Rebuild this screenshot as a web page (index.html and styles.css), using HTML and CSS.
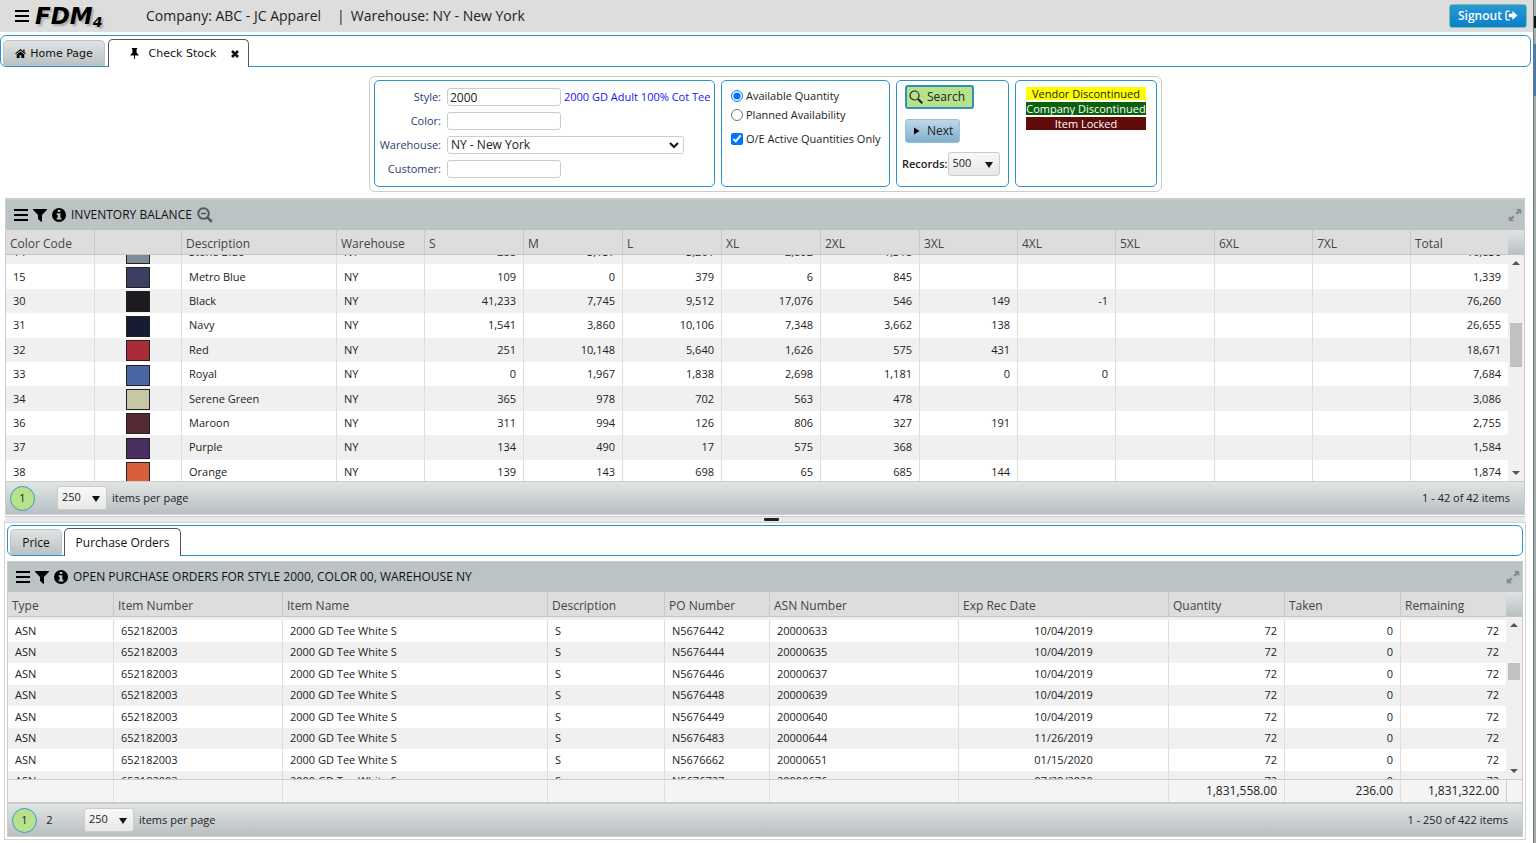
FILE: index.html
```html
<!DOCTYPE html>
<html lang="en">
<head>
<meta charset="utf-8">
<title>Check Stock</title>
<link rel="stylesheet" href="styles.css">
</head>
<body>
<svg class="defs" width="0" height="0" aria-hidden="true">
  <symbol id="i-menu" viewBox="0 0 14 12"><path d="M0 0h14v2H0zM0 5h14v2H0zM0 10h14v2H0z"/></symbol>
  <symbol id="i-filter" viewBox="0 0 14 14"><path d="M.6 1h12.8c.6 0 .8.7.4 1.100L9 7v6.300c0 .5-.5.7-.9.4L5.400 11.200A1 1 0 0 1 5 10.500V7L.2 2.100C-.2 1.700 0 1 .6 1z"/></symbol>
  <symbol id="i-info" viewBox="0 0 14 14"><circle cx="7" cy="7" r="7"/><path fill="#bcc3c4" d="M5.800 2h2.500v2H5.800zM4.800 5.200h3.600v4.600h1v1.700H4.700V9.800h1V6.900h-.9z"/></symbol>
  <symbol id="i-expand" viewBox="0 0 14 14"><path d="M8 1h5.200v5.200L11.400 4.400 9 6.800 7.400 5.200 9.800 2.800zM6 13.200H.8V8l1.800 1.800L5 7.400 6.600 9 4.200 11.400z"/></symbol>
</svg>
<div class="shell">
<div class="app">
  <header class="topbar">
    <button class="icon-btn menu" aria-label="Menu"><svg><use href="#i-menu"/></svg></button>
    <span class="logo">FDM<sub>4</sub></span>
    <span class="context">Company: ABC - JC Apparel</span>
    <span class="context-sep">|</span>
    <span class="context">Warehouse: NY - New York</span>
    <button class="signout">Signout <svg viewBox="0 0 14 12"><path fill="none" stroke="#fff" stroke-width="1.500" d="M5 1.200H2.500Q1 1.200 1 2.700v6.600q0 1.500 1.500 1.500H5"/><path fill="#fff" d="M4 4h4V1.200L13.500 6 8 10.800V8H4z"/></svg></button>
  </header>

  <nav class="tabs main-tabs">
    <button class="tab"><svg class="home" viewBox="0 0 12 10"><path d="M6 0l6 5-.8.900L6 1.700.8 5.900 0 5zM9 .500h1.500v3L9 2.300zM6 2.700l4.200 3.400V10H7V7H5v3H1.800V6.100z"/></svg> Home Page</button>
    <button class="tab active"><svg class="pin" viewBox="0 0 10 12"><path d="M2 0h6v1.200H7.300v4L9.500 7.500v.8H5.500V12h-1V8.300H.5v-.8L2.700 5.200v-4H2z"/></svg> Check Stock <svg class="close" viewBox="0 0 8 8"><path stroke="#111" stroke-width="2.600" d="M1 1l6 6M7 1L1 7"/></svg></button>
  </nav>

  <form class="filters">
    <section class="box lookup">
      <label for="style">Style:</label>
      <div class="with-note"><input class="field" id="style" value="2000"><span class="note">2000 GD Adult 100% Cot Tee</span></div>
      <label for="color">Color:</label>
      <div><input class="field" id="color"></div>
      <label for="wh">Warehouse:</label>
      <div class="select-wrap"><select class="field wide" id="wh"><option>NY - New York</option></select><svg viewBox="0 0 10 7"><path fill="none" stroke="#111" stroke-width="2" d="M1 1l4 4 4-4"/></svg></div>
      <label for="cust">Customer:</label>
      <div><input class="field" id="cust"></div>
    </section>
    <section class="box choices">
      <label><input type="radio" name="qty" checked>Available Quantity</label>
      <label><input type="radio" name="qty">Planned Availability</label>
      <label class="check"><input type="checkbox" checked>O/E Active Quantities Only</label>
    </section>
    <section class="box actions">
      <button type="button" class="btn search"><svg viewBox="0 0 14 14"><circle cx="5.500" cy="5.500" r="4.500" fill="none" stroke="#222" stroke-width="1.200"/><path stroke="#222" stroke-width="2" d="M9 9l4.300 4.300"/></svg>Search</button>
      <button type="button" class="btn next"><svg viewBox="0 0 14 14"><path d="M5 3.500L10.500 7 5 10.500z"/></svg>Next</button>
      <div class="records"><label for="rec">Records:</label><span class="drop"><select id="rec"><option>500</option></select></span></div>
    </section>
    <section class="box legend">
      <span class="tag vendor">Vendor Discontinued</span>
      <span class="tag company">Company Discontinued</span>
      <span class="tag locked">Item Locked</span>
    </section>
  </form>

  <section class="grid stock">
    <div class="toolbar">
      <button class="icon-btn" aria-label="Menu"><svg><use href="#i-menu"/></svg></button>
      <button class="icon-btn" aria-label="Filter"><svg><use href="#i-filter"/></svg></button>
      <button class="icon-btn" aria-label="Info"><svg><use href="#i-info"/></svg></button>
      <h2>INVENTORY BALANCE</h2>
      <button class="icon-btn zoom" aria-label="Zoom out"><svg viewBox="0 0 16 16"><g fill="none" stroke="#555b5c" stroke-width="2"><circle cx="6.500" cy="6.500" r="5.300"/><path stroke-width="2.600" d="M10.500 10.500l4.300 4.300"/><path stroke-width="1.600" d="M4 6.500h5"/></g></svg></button>
      <button class="icon-btn expand" aria-label="Expand"><svg><use href="#i-expand"/></svg></button>
    </div>
    <div class="head">
      <table><colgroup><col class="w88"><col class="w87"><col class="w155"><col class="w88"><col class="w99"><col class="w99"><col class="w99"><col class="w99"><col class="w99"><col class="w98"><col class="w98"><col class="w99"><col class="w98"><col class="w98"><col class="w98"></colgroup>
      <thead><tr><th>Color Code</th><th></th><th>Description</th><th>Warehouse</th><th>S</th><th>M</th><th>L</th><th>XL</th><th>2XL</th><th>3XL</th><th>4XL</th><th>5XL</th><th>6XL</th><th>7XL</th><th>Total</th></tr></thead></table>
      <i class="corner"></i>
    </div>
    <div class="body">
      <div class="view"><table><colgroup><col class="w88"><col class="w87"><col class="w155"><col class="w88"><col class="w99"><col class="w99"><col class="w99"><col class="w99"><col class="w99"><col class="w98"><col class="w98"><col class="w99"><col class="w98"><col class="w98"><col class="w98"></colgroup>
      <tbody>
      <tr><td>14</td><td><i class="swatch" style="background:#7b8c98"></i></td><td>Stone Blue</td><td>NY</td><td>288</td><td>3,137</td><td>3,201</td><td>2,892</td><td>1,318</td><td></td><td></td><td></td><td></td><td></td><td>10,836</td></tr>
      <tr><td>15</td><td><i class="swatch" style="background:#3c3f60"></i></td><td>Metro Blue</td><td>NY</td><td>109</td><td>0</td><td>379</td><td>6</td><td>845</td><td></td><td></td><td></td><td></td><td></td><td>1,339</td></tr>
      <tr><td>30</td><td><i class="swatch" style="background:#1c1b20"></i></td><td>Black</td><td>NY</td><td>41,233</td><td>7,745</td><td>9,512</td><td>17,076</td><td>546</td><td>149</td><td>-1</td><td></td><td></td><td></td><td>76,260</td></tr>
      <tr><td>31</td><td><i class="swatch" style="background:#161c32"></i></td><td>Navy</td><td>NY</td><td>1,541</td><td>3,860</td><td>10,106</td><td>7,348</td><td>3,662</td><td>138</td><td></td><td></td><td></td><td></td><td>26,655</td></tr>
      <tr><td>32</td><td><i class="swatch" style="background:#ab2b38"></i></td><td>Red</td><td>NY</td><td>251</td><td>10,148</td><td>5,640</td><td>1,626</td><td>575</td><td>431</td><td></td><td></td><td></td><td></td><td>18,671</td></tr>
      <tr><td>33</td><td><i class="swatch" style="background:#4766a3"></i></td><td>Royal</td><td>NY</td><td>0</td><td>1,967</td><td>1,838</td><td>2,698</td><td>1,181</td><td>0</td><td>0</td><td></td><td></td><td></td><td>7,684</td></tr>
      <tr><td>34</td><td><i class="swatch" style="background:#c5c7a5"></i></td><td>Serene Green</td><td>NY</td><td>365</td><td>978</td><td>702</td><td>563</td><td>478</td><td></td><td></td><td></td><td></td><td></td><td>3,086</td></tr>
      <tr><td>36</td><td><i class="swatch" style="background:#552a32"></i></td><td>Maroon</td><td>NY</td><td>311</td><td>994</td><td>126</td><td>806</td><td>327</td><td>191</td><td></td><td></td><td></td><td></td><td>2,755</td></tr>
      <tr><td>37</td><td><i class="swatch" style="background:#482e61"></i></td><td>Purple</td><td>NY</td><td>134</td><td>490</td><td>17</td><td>575</td><td>368</td><td></td><td></td><td></td><td></td><td></td><td>1,584</td></tr>
      <tr><td>38</td><td><i class="swatch" style="background:#d75f3a"></i></td><td>Orange</td><td>NY</td><td>139</td><td>143</td><td>698</td><td>65</td><td>685</td><td>144</td><td></td><td></td><td></td><td></td><td>1,874</td></tr>
      </tbody></table></div>
      <div class="scroll"><i class="up"></i><i class="thumb"></i><i class="down"></i></div>
    </div>
    <footer class="pager">
      <button class="page current">1</button>
      <span class="drop"><select id="size1"><option>250</option></select></span>
      <label for="size1">items per page</label>
      <span class="range">1 - 42 of 42 items</span>
    </footer>
  </section>

  <div class="splitter"><i></i></div>

  <section class="lower">
    <nav class="tabs sub-tabs">
      <button class="tab">Price</button>
      <button class="tab active">Purchase Orders</button>
    </nav>
    <section class="grid orders">
      <div class="toolbar">
        <button class="icon-btn" aria-label="Menu"><svg><use href="#i-menu"/></svg></button>
        <button class="icon-btn" aria-label="Filter"><svg><use href="#i-filter"/></svg></button>
        <button class="icon-btn" aria-label="Info"><svg><use href="#i-info"/></svg></button>
        <h2>OPEN PURCHASE ORDERS FOR STYLE 2000, COLOR 00, WAREHOUSE NY</h2>
        <button class="icon-btn expand" aria-label="Expand"><svg><use href="#i-expand"/></svg></button>
      </div>
      <div class="head">
        <table><colgroup><col class="w105"><col class="w169"><col class="w265"><col class="w117"><col class="w105"><col class="w189"><col class="w210"><col class="w116"><col class="w116"><col class="w106"></colgroup>
        <thead><tr><th>Type</th><th>Item Number</th><th>Item Name</th><th>Description</th><th>PO Number</th><th>ASN Number</th><th>Exp Rec Date</th><th>Quantity</th><th>Taken</th><th>Remaining</th></tr></thead></table>
        <i class="corner"></i>
      </div>
      <div class="body">
        <div class="view"><table><colgroup><col class="w105"><col class="w169"><col class="w265"><col class="w117"><col class="w105"><col class="w189"><col class="w210"><col class="w116"><col class="w116"><col class="w106"></colgroup>
        <tbody>
        <tr><td>ASN</td><td>652182003</td><td>2000 GD Tee White S</td><td>S</td><td>N5676442</td><td>20000633</td><td>10/04/2019</td><td>72</td><td>0</td><td>72</td></tr>
        <tr><td>ASN</td><td>652182003</td><td>2000 GD Tee White S</td><td>S</td><td>N5676444</td><td>20000635</td><td>10/04/2019</td><td>72</td><td>0</td><td>72</td></tr>
        <tr><td>ASN</td><td>652182003</td><td>2000 GD Tee White S</td><td>S</td><td>N5676446</td><td>20000637</td><td>10/04/2019</td><td>72</td><td>0</td><td>72</td></tr>
        <tr><td>ASN</td><td>652182003</td><td>2000 GD Tee White S</td><td>S</td><td>N5676448</td><td>20000639</td><td>10/04/2019</td><td>72</td><td>0</td><td>72</td></tr>
        <tr><td>ASN</td><td>652182003</td><td>2000 GD Tee White S</td><td>S</td><td>N5676449</td><td>20000640</td><td>10/04/2019</td><td>72</td><td>0</td><td>72</td></tr>
        <tr><td>ASN</td><td>652182003</td><td>2000 GD Tee White S</td><td>S</td><td>N5676483</td><td>20000644</td><td>11/26/2019</td><td>72</td><td>0</td><td>72</td></tr>
        <tr><td>ASN</td><td>652182003</td><td>2000 GD Tee White S</td><td>S</td><td>N5676662</td><td>20000651</td><td>01/15/2020</td><td>72</td><td>0</td><td>72</td></tr>
        <tr><td>ASN</td><td>652182003</td><td>2000 GD Tee White S</td><td>S</td><td>N5676727</td><td>20000676</td><td>07/29/2020</td><td>72</td><td>0</td><td>72</td></tr>
        </tbody></table></div>
        <div class="scroll"><i class="up"></i><i class="thumb"></i><i class="down"></i></div>
      </div>
      <div class="totals">
        <table><colgroup><col class="w105"><col class="w169"><col class="w265"><col class="w117"><col class="w105"><col class="w189"><col class="w210"><col class="w116"><col class="w116"><col class="w106"></colgroup>
        <tfoot><tr><td></td><td></td><td></td><td></td><td></td><td></td><td></td><td>1,831,558.00</td><td>236.00</td><td>1,831,322.00</td></tr></tfoot></table>
        <i class="totals-end"></i>
      </div>
      <footer class="pager">
        <button class="page current">1</button>
        <button class="page">2</button>
        <span class="drop"><select id="size2"><option>250</option></select></span>
        <label for="size2">items per page</label>
        <span class="range">1 - 250 of 422 items</span>
      </footer>
    </section>
  </section>
</div>
<aside class="edge"><i class="mark"></i><i class="blue"></i></aside>
</div>
</body>
</html>
```

FILE: styles.css
```css
* { box-sizing: border-box; }
body { margin: 0; background: #fff; color: #222; font: 11px/16px "Open Sans", "Noto Sans", sans-serif; }
button, input, select { font: inherit; color: inherit; margin: 0; }
button { border: 0; background: none; padding: 0; cursor: pointer; }
.defs { position: absolute; }
.shell { display: flex; min-height: 100vh; overflow: hidden; }
.app { flex: 1; min-width: 0; }

.edge { width: 3px; background: #a4adb2; border-left: 1px solid #6e7478; display: flex; flex-direction: column; }
.edge .mark { height: 12px; margin-top: 16px; background: #111; }
.edge .blue { height: 52px; margin-top: 16px; background: #4a7bb0; }

.topbar { display: flex; align-items: center; height: 32px; padding: 0 6px 0 15px; background: #ddd; font-size: 14px; }
.menu svg { width: 14px; height: 12px; }
.icon-btn { display: flex; }
.logo { width: 111px; margin-left: 6px; color: #000; font: italic bold 23px/26px "DejaVu Sans", sans-serif; text-shadow: 2px 2px 2px #aaa; }
.logo sub { font-size: 14px; line-height: 8px; vertical-align: -3px; }
.context-sep { margin: 0 6px 0 16px; }
.signout { margin-left: auto; height: 24px; width: 78px; border: 1px solid #7cc49a; border-radius: 3px; background: linear-gradient(#2b98d6, #0a80cc); color: #fff; font-size: 12px; font-weight: 600; }
.signout svg { width: 13px; height: 11px; vertical-align: -1px; }

.tabs { display: flex; align-items: flex-end; gap: 3px; border: 1px solid #2a93cf; border-radius: 6px; background: #fff; }
.main-tabs { height: 32px; margin: 3px 2px 0 0; padding-left: 2px; }
.tab { display: flex; align-items: center; justify-content: center; height: 26px; border: 1px solid #c0c4c6; border-bottom: 0; border-radius: 5px 5px 0 0; background: linear-gradient(#dfe3e4, #bac1c3); font-size: 12px; color: #111; }
.tab.active { height: 28px; margin-bottom: -1px; background: #fff; border-color: #555; }
.main-tabs .tab { width: 102px; gap: 4px; font-family: "DejaVu Sans", sans-serif; font-size: 11px; }
.main-tabs .tab.active { width: 141px; gap: 10px; padding-left: 12px; }
.home { width: 11px; height: 9px; }
.pin { width: 9px; height: 11px; }
.close { width: 8px; height: 8px; margin-left: 5px; }

.filters { display: flex; gap: 6px; width: 793px; margin: 9px 0 6px 369px; padding: 3px 4px 4px; border: 1px solid #ccc; border-radius: 6px; }
.box { height: 107px; border: 1px solid #2a93cf; border-radius: 5px; }
.lookup { width: 341px; display: grid; grid-template-columns: 66px 1fr; column-gap: 6px; grid-auto-rows: 24px; align-items: center; padding-top: 4px; }
.lookup > label { text-align: right; color: #2b3c6e; }
.lookup > div { display: flex; align-items: center; }
.field { width: 114px; height: 18px; padding: 0 2px; border: 1px solid #ccc; border-radius: 3px; background: #fff; font-size: 12px; line-height: 16px; }
.field.wide { width: 237px; padding: 0 3px; appearance: none; }
.select-wrap { position: relative; }
.select-wrap svg { position: absolute; left: 222px; width: 10px; height: 7px; }
.note { margin-left: 3px; color: #1414f0; white-space: nowrap; }
.choices { width: 169px; padding: 5px 9px; white-space: nowrap; }
.choices label { display: flex; align-items: center; gap: 3px; height: 19px; }
.choices label.check { margin-top: 5px; }
.choices input { width: 12px; height: 12px; }
.actions { width: 113px; padding: 4px 0 0 8px; }
.btn { display: flex; align-items: center; height: 24px; border-radius: 3px; border: 1px solid #9dbdd0; padding-left: 3px; font-size: 12px; }
.btn svg { width: 14px; height: 14px; margin-right: 4px; }
.search { width: 69px; padding-left: 2px; background: #b5e28b; border: 2px solid #2d91bd; }
.next { width: 55px; margin-top: 10px; background: linear-gradient(#bdd8e8, #7fb0cf); }
.records { display: flex; align-items: center; margin: 9px 0 0 -3px; font-weight: 600; }
.drop { position: relative; display: inline-flex; }
.drop select { appearance: none; width: 50px; height: 24px; padding: 0 0 2px 4px; border: 1px solid #ccc; border-radius: 3px; background: linear-gradient(#f8f8f8, #e8e8e8); font-weight: 400; }
.drop::after { content: ""; position: absolute; right: 7px; top: 10px; border: 4px solid transparent; border-top: 6px solid #111; border-bottom: 0; pointer-events: none; }
.records .drop select { width: 52px; }
.legend { width: 142px; padding: 6px 10px; display: flex; flex-direction: column; gap: 2px; }
.tag { height: 13px; line-height: 13px; text-align: center; white-space: nowrap; }
.vendor { background: #ff0; }
.company { background: #0b610b; color: #fff; }
.locked { background: #610b0b; color: #fff; }

.grid { border: 1px solid #ccc; }
.stock { margin: 0 8px 0 5px; border-top-width: 2px; }
.toolbar { display: flex; align-items: center; gap: 5px; height: 30px; padding: 0 2px 0 8px; background: #bcc3c4; }
.toolbar svg { width: 14px; height: 14px; }
.toolbar h2 { margin: 0; font-size: 12px; font-weight: 400; color: #111; }
.toolbar .zoom svg { width: 16px; height: 16px; }
.toolbar .expand { margin-left: auto; fill: #85898a; }
table { flex: 1; width: 100%; table-layout: fixed; border-collapse: separate; border-spacing: 0; }
th, td { border-left: 1px solid #ddd; padding: 0 7px; white-space: nowrap; overflow: hidden; text-align: left; }
th:first-child, td:first-child { border-left: 0; }
.head { display: flex; height: 25px; background: #ddd; border-bottom: 1px solid #c4c4c4; }
.head table { height: 24px; }
th { padding: 3px 4px 0; font-size: 12px; font-weight: 400; color: #444; border-left-color: #c8c8c8; }
.corner { width: 16px; background: linear-gradient(#dfe3e4, #bac1c3); }
.body { display: flex; overflow: hidden; }
.view { flex: 1; min-width: 0; }
.stock .body { height: 226px; }
.stock .view table { height: 244px; margin-top: -15px; }
.stock tbody tr:nth-child(odd), .orders tbody tr:nth-child(even) { background: #f0f0f0; }
td:nth-child(2) .swatch { display: block; width: 24px; height: 21px; margin: 2px auto 0; border: 1px solid #222; }
.stock td:nth-child(n+5) { text-align: right; }
.orders td:nth-child(7) { text-align: center; }
.orders td:nth-child(n+8) { text-align: right; }
.scroll { width: 16px; background: #f0f0f0; display: flex; flex-direction: column; align-items: center; padding: 6px 0; }
.scroll .up, .scroll .down { border: 4px solid transparent; border-top: 0; border-bottom: 4px solid #555; }
.scroll .down { border-top: 4px solid #555; border-bottom: 0; margin-top: auto; }
.scroll .thumb { width: 12px; height: 44px; margin-top: 58px; background: #c1c1c1; }
.pager { display: flex; align-items: center; height: 33px; padding: 0 14px 0 4px; border-top: 1px solid #ccc; background: linear-gradient(#e0e4e4, #b9c0c2); }
.page { width: 25px; height: 25px; border-radius: 50%; }
.page.current { background: #b5e28b; border: 1px solid #3d9cc0; }
.pager .drop { margin: 0 5px 0 22px; }
.range { margin-left: auto; }

.splitter { display: flex; justify-content: center; align-items: center; height: 6px; margin: 1px 8px 0 5px; background: #e8e8e8; border-top: 1px solid #ccc; }
.splitter i { width: 15px; height: 3px; margin-left: 12px; border-radius: 1px; background: #222; }
.lower { margin: 0 7px 0 4px; padding: 2px; border: 1px solid #d4d4d4; }
.sub-tabs { height: 31px; gap: 2px; padding-left: 2px; }
.sub-tabs .tab { width: 52px; }
.sub-tabs .tab.active { width: 117px; }
.orders { margin-top: 5px; }
.orders .body { height: 162px; }
.orders .view { padding-top: 3px; background: #f0f0f0; }
.orders .view table { height: 172px; background: #fff; }
.orders .thumb { height: 17px; margin-top: 36px; }
.totals { display: flex; height: 23px; background: #f4f4f4; border-top: 1px solid #ccc; }
.totals-end { width: 16px; border-left: 1px solid #ccc; }
.totals table { height: 22px; }
.totals td { font-size: 12px; }
.orders .pager { border-top-width: 2px; height: 34px; }

.w87 { width: 87px; } .w88 { width: 88px; } .w98 { width: 98px; } .w99 { width: 99px; }
.w105 { width: 105px; } .w106 { width: 106px; } .w116 { width: 116px; } .w117 { width: 117px; }
.w155 { width: 155px; } .w169 { width: 169px; } .w189 { width: 189px; } .w210 { width: 210px; } .w265 { width: 265px; }
```
